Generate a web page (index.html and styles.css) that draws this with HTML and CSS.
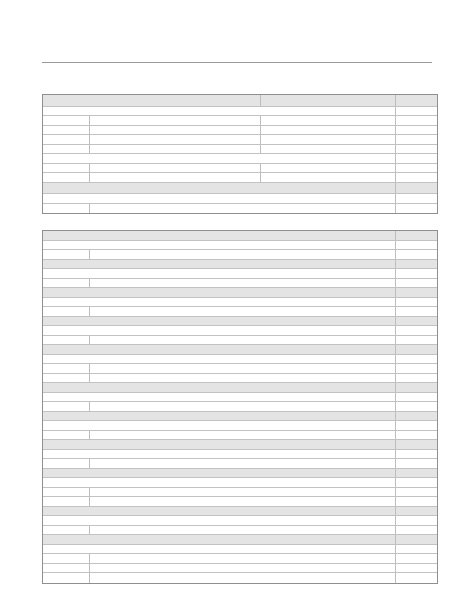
FILE: index.html
```html
<!DOCTYPE html>
<html>
<head>
<meta charset="utf-8">
<link rel="stylesheet" href="styles.css">
</head>
<body>
<div class="page">
  <div class="rule"></div>

  <div class="table t1">
    <div class="row head gray"><div class="cell s12"></div><div class="cell c3"></div><div class="cell c4"></div></div>
    <div class="row"><div class="cell fill"></div><div class="cell c4"></div></div>
    <div class="row"><div class="cell c1"></div><div class="cell c2"></div><div class="cell c3"></div><div class="cell c4"></div></div>
    <div class="row"><div class="cell c1"></div><div class="cell c2"></div><div class="cell c3"></div><div class="cell c4"></div></div>
    <div class="row"><div class="cell c1"></div><div class="cell c2"></div><div class="cell c3"></div><div class="cell c4"></div></div>
    <div class="row"><div class="cell c1"></div><div class="cell c2"></div><div class="cell c3"></div><div class="cell c4"></div></div>
    <div class="row"><div class="cell fill"></div><div class="cell c4"></div></div>
    <div class="row"><div class="cell c1"></div><div class="cell c2"></div><div class="cell c3"></div><div class="cell c4"></div></div>
    <div class="row"><div class="cell c1"></div><div class="cell c2"></div><div class="cell c3"></div><div class="cell c4"></div></div>
    <div class="row head gray"><div class="cell fill"></div><div class="cell c4"></div></div>
    <div class="row"><div class="cell fill"></div><div class="cell c4"></div></div>
    <div class="row"><div class="cell c1"></div><div class="cell fill"></div><div class="cell c4"></div></div>
  </div>

  <div class="table t2">
    <div class="row gray"><div class="cell fill"></div><div class="cell c4"></div></div>
    <div class="row"><div class="cell fill"></div><div class="cell c4"></div></div>
    <div class="row"><div class="cell c1"></div><div class="cell fill"></div><div class="cell c4"></div></div>
    <div class="row gray"><div class="cell fill"></div><div class="cell c4"></div></div>
    <div class="row"><div class="cell fill"></div><div class="cell c4"></div></div>
    <div class="row"><div class="cell c1"></div><div class="cell fill"></div><div class="cell c4"></div></div>
    <div class="row gray"><div class="cell fill"></div><div class="cell c4"></div></div>
    <div class="row"><div class="cell fill"></div><div class="cell c4"></div></div>
    <div class="row"><div class="cell c1"></div><div class="cell fill"></div><div class="cell c4"></div></div>
    <div class="row gray"><div class="cell fill"></div><div class="cell c4"></div></div>
    <div class="row"><div class="cell fill"></div><div class="cell c4"></div></div>
    <div class="row"><div class="cell c1"></div><div class="cell fill"></div><div class="cell c4"></div></div>
    <div class="row gray"><div class="cell fill"></div><div class="cell c4"></div></div>
    <div class="row"><div class="cell fill"></div><div class="cell c4"></div></div>
    <div class="row"><div class="cell c1"></div><div class="cell fill"></div><div class="cell c4"></div></div>
    <div class="row"><div class="cell c1"></div><div class="cell fill"></div><div class="cell c4"></div></div>
    <div class="row gray"><div class="cell fill"></div><div class="cell c4"></div></div>
    <div class="row"><div class="cell fill"></div><div class="cell c4"></div></div>
    <div class="row"><div class="cell c1"></div><div class="cell fill"></div><div class="cell c4"></div></div>
    <div class="row gray"><div class="cell fill"></div><div class="cell c4"></div></div>
    <div class="row"><div class="cell fill"></div><div class="cell c4"></div></div>
    <div class="row"><div class="cell c1"></div><div class="cell fill"></div><div class="cell c4"></div></div>
    <div class="row gray"><div class="cell fill"></div><div class="cell c4"></div></div>
    <div class="row"><div class="cell fill"></div><div class="cell c4"></div></div>
    <div class="row"><div class="cell c1"></div><div class="cell fill"></div><div class="cell c4"></div></div>
    <div class="row gray"><div class="cell fill"></div><div class="cell c4"></div></div>
    <div class="row"><div class="cell fill"></div><div class="cell c4"></div></div>
    <div class="row"><div class="cell c1"></div><div class="cell fill"></div><div class="cell c4"></div></div>
    <div class="row"><div class="cell c1"></div><div class="cell fill"></div><div class="cell c4"></div></div>
    <div class="row gray"><div class="cell fill"></div><div class="cell c4"></div></div>
    <div class="row"><div class="cell fill"></div><div class="cell c4"></div></div>
    <div class="row"><div class="cell c1"></div><div class="cell fill"></div><div class="cell c4"></div></div>
    <div class="row gray"><div class="cell fill"></div><div class="cell c4"></div></div>
    <div class="row"><div class="cell fill"></div><div class="cell c4"></div></div>
    <div class="row"><div class="cell c1"></div><div class="cell fill"></div><div class="cell c4"></div></div>
    <div class="row"><div class="cell c1"></div><div class="cell fill"></div><div class="cell c4"></div></div>
    <div class="row"><div class="cell c1"></div><div class="cell fill"></div><div class="cell c4"></div></div>
  </div>
</div>
</body>
</html>
```

FILE: styles.css
```css
html, body {
  margin: 0;
  padding: 0;
  background: #ffffff;
  font-family: "Liberation Sans", Arial, sans-serif;
}

.page {
  padding: 62px 0 0 42px;
  display: flex;
  flex-direction: column;
  align-items: flex-start;
}

.rule {
  width: 390px;
  height: 0;
  border-top: 1px solid #999999;
}

.table {
  box-sizing: border-box;
  width: 396px;
  border: 1px solid #8f8f8f;
  display: flex;
  flex-direction: column;
}

.t1 {
  margin-top: 31px;
}

.t2 {
  margin-top: 16px;
}

.row {
  box-sizing: border-box;
  display: flex;
  height: 9.5px;
  border-bottom: 1px solid #c2c2c2;
}

.row:last-child {
  border-bottom: none;
}

.row.head {
  height: 11.5px;
}

.gray {
  background: #e4e4e4;
}

.cell {
  box-sizing: border-box;
  border-right: 1px solid #bdbdbd;
  flex: none;
}

.cell:last-child {
  border-right: none;
}

.c1 { width: 47px; }
.c2 { width: 171px; }
.c3 { width: 135px; }
.c4 { width: 41px; }
.s12 { width: 218px; }
.fill { flex: 1 1 auto; }
```
